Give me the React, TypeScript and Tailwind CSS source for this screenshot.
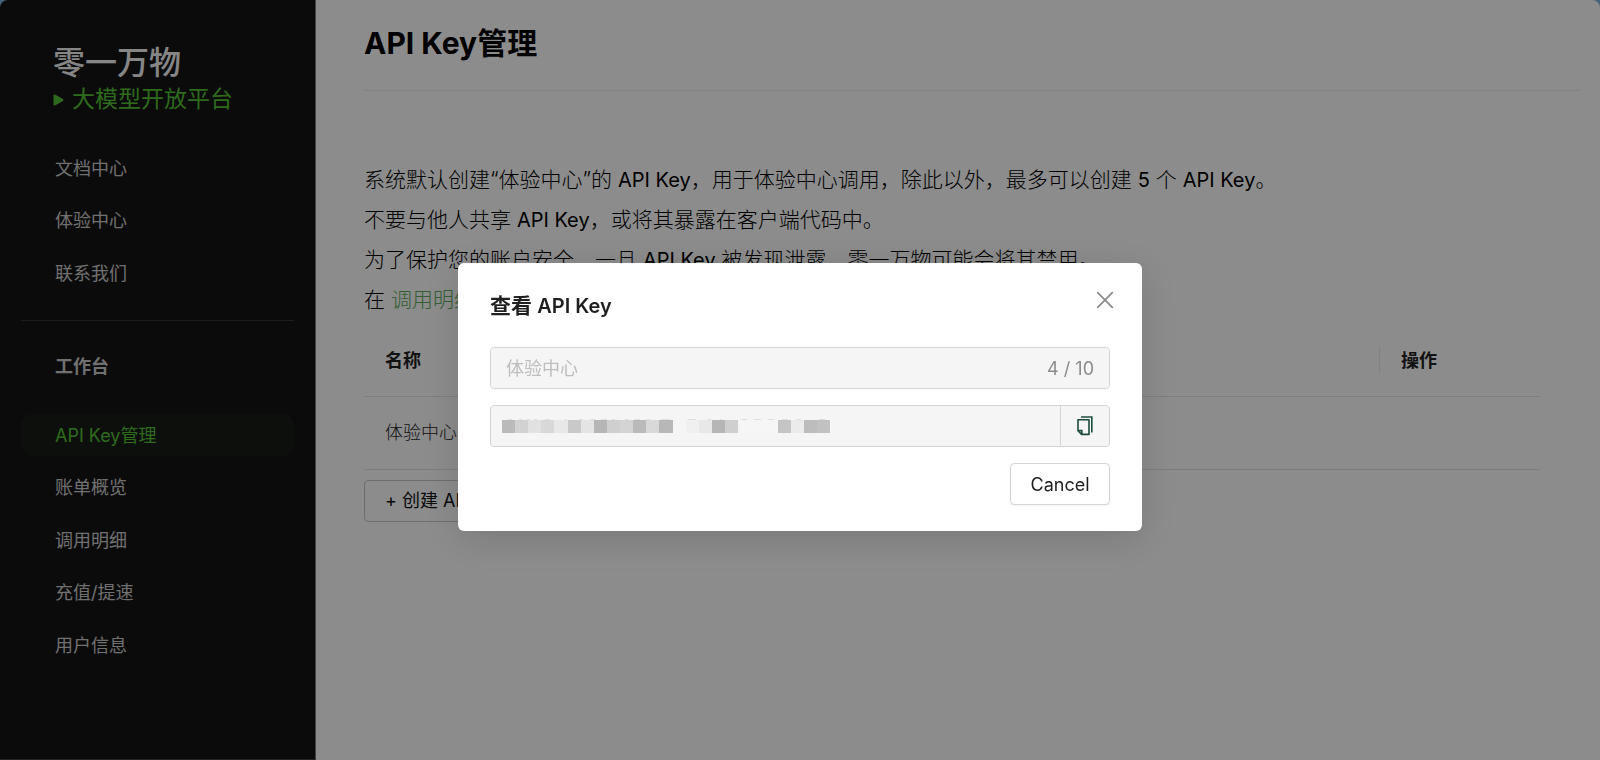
import type { ReactNode } from 'react'
import clsx from 'clsx'

const DOC_LINKS = ['文档中心', '体验中心', '联系我们']
const WORKSPACE_LINKS = ['API Key管理', '账单概览', '调用明细', '充值/提速', '用户信息']

// one block per entry, null leaves a gap
const KEY_MASK = [
  '#bababa', '#d2d2d2', '#e1e1e1', '#d8d8d8', '#e8e8e8', '#c9c9c9', '#e4e4e4', '#b6b6b6', '#cfcfcf', '#d4d4d4',
  '#bababa', '#d9d9d9', '#b8b8b8', null, '#f0f0f0', '#e8e8e8', '#b6b6b6', '#cfcfcf', '#f6f6f6', '#f6f6f6', '#f6f6f6',
  '#c4c4c4', '#ebebeb', '#bdbdbd', '#c2c2c2',
]

function NavLink({ active, children }: { active?: boolean; children: ReactNode }) {
  return (
    <a
      href="#"
      className={clsx(
        'flex h-[42px] items-center rounded-xl pl-[34px] text-[18px]',
        active ? 'bg-[#191d19] text-[#55c234]' : 'text-[#cccccc]',
      )}
    >
      {children}
    </a>
  )
}

function Sidebar() {
  return (
    <aside className="w-[316px] shrink-0 border-r border-b border-r-[#7a7a7a] border-b-[#444] bg-[#141414] px-[21px]">
      <div className="pt-[42px] pl-8">
        <div className="pt-px text-[32px] leading-10 font-medium text-[#f4f4f4]">零一万物</div>
        <div className="flex items-center gap-2 text-[23px] leading-[33px] text-[#55c234]">
          <svg width="11" height="12" viewBox="0 0 11 12" fill="currentColor" aria-hidden="true">
            <path d="M0.5 1.5Q0.5 0 2 0.6L10 5Q11 6 10 7L2 11.4Q0.5 12 0.5 10.5Z" />
          </svg>
          大模型开放平台
        </div>
      </div>
      <nav className="mt-[31px] flex h-[147px] flex-col justify-between">
        {DOC_LINKS.map((label) => (
          <NavLink key={label}>{label}</NavLink>
        ))}
      </nav>
      <hr className="mt-[26px] border-[#363636]" />
      <h2 className="mt-[25px] pl-[34px] text-[18px] leading-[42px] font-bold text-[#cccccc]">工作台</h2>
      <nav className="mt-[26px] flex h-[252px] flex-col justify-between">
        {WORKSPACE_LINKS.map((label, i) => (
          <NavLink key={label} active={i === 0}>
            {label}
          </NavLink>
        ))}
      </nav>
    </aside>
  )
}

function KeyTable() {
  return (
    <table className="w-full border-collapse text-left text-[18px] text-[#222]">
      <thead>
        <tr className="h-[72px] border-b border-[#e6e6e6]">
          <th className="pt-0.5 pl-[21px] font-bold">名称</th>
          <th className="w-[161px] pt-0.5 font-bold">
            <div className="border-l border-[#ececec] pl-[21px]">操作</div>
          </th>
        </tr>
      </thead>
      <tbody>
        <tr className="h-[73px] border-b border-[#e6e6e6]">
          <td className="pl-[21px] font-light">体验中心</td>
          <td />
        </tr>
      </tbody>
    </table>
  )
}

function Latin({ children }: { children: ReactNode }) {
  return <span className="text-[20px] font-normal">{children}</span>
}

function ApiKeyPage() {
  return (
    <main className="min-w-0 flex-1 bg-white pr-5 pl-12">
      <header className="border-b border-[#eee] pt-5 pb-6">
        <h1 className="text-[30px] leading-[46px] font-bold text-black">API Key管理</h1>
      </header>
      <div className="pt-[69px] pr-10">
        <div className="text-[21px] leading-10 font-light text-black">
          <p>
            系统默认创建“体验中心”的 <Latin>API Key</Latin>，用于体验中心调用，除此以外，最多可以创建 <Latin>5</Latin> 个{' '}
            <Latin>API Key</Latin>。
          </p>
          <p>
            不要与他人共享 <Latin>API Key</Latin>，或将其暴露在客户端代码中。
          </p>
          <p>
            为了保护您的账户安全，一旦 <Latin>API Key</Latin> 被发现泄露，零一万物可能会将其禁用。
          </p>
          <p>
            在{' '}
            <a href="#" className="text-[#5fae5f]">
              调用明细
            </a>
          </p>
        </div>
        <div className="mt-1">
          <KeyTable />
        </div>
        <button className="mt-2.5 h-[42px] rounded border border-[#c8c8c8] px-5 text-[18px] text-[#111]">
          + 创建 API Key
        </button>
      </div>
    </main>
  )
}

function CloseIcon() {
  return (
    <svg width="18" height="18" viewBox="0 0 18 18" fill="none" stroke="#8a8a8a" strokeWidth="1.7" aria-hidden="true">
      <path d="M1.2 1.2 16.8 16.8M16.8 1.2 1.2 16.8" />
    </svg>
  )
}

function CopyIcon() {
  return (
    <svg width="16" height="20" viewBox="0 0 16 20" fill="none" stroke="#1f4d3c" strokeWidth="1.6" aria-hidden="true">
      <path d="M4 1H14.8V16.4" />
      <path d="M1 3.8H12V18.4H4.6L1 14.8Z" strokeLinejoin="round" />
      <path d="M1.4 14.6H4.8V18" />
    </svg>
  )
}

function MaskedKey() {
  return (
    <svg
      width="328"
      height="15"
      viewBox="0 0 325 15"
      preserveAspectRatio="none"
      shapeRendering="crispEdges"
      className="absolute top-3 left-[11px]"
      aria-hidden="true"
    >
      <path
        d="M6 1.5h4M17 1.5h3M25 1.5h3M32 1.5h3M43 1.5h5M62 1.5h2M76 1.5h4M87 1.5h5M98 1.5h6M109 1.5h3M122 1.5h3M132 1.5h5M143 1.5h4M158 1.5h8M184 1.5h8M204 1.5h3M216 1.5h2M237 1.5h6M250 1.5h7M264 1.5h6M277 1.5h6M291 1.5h5M314 1.5h6"
        stroke="#dedede"
      />
      {KEY_MASK.map((fill, i) => fill && <rect key={i} x={i * 13} y="2" width="13" height="13" fill={fill} />)}
    </svg>
  )
}

function ViewKeyDialog() {
  return (
    <div
      role="dialog"
      aria-modal="true"
      aria-labelledby="view-key-title"
      className="relative mt-[263px] w-[684px] rounded-md bg-white px-8 py-[26px] shadow-[0_8px_40px_rgba(0,0,0,0.15)]"
    >
      <h2 id="view-key-title" className="text-[21px] leading-[34px] font-semibold text-[#1f1f1f]">
        查看 <span className="text-[20px]">API Key</span>
      </h2>
      <button aria-label="Close" className="absolute top-7 right-7">
        <CloseIcon />
      </button>

      <div className="mt-6 flex h-[42px] items-center rounded border border-[#d4d4d4] bg-[#f5f5f5] px-[15px] text-[18px]">
        <input
          aria-label="名称"
          disabled
          defaultValue="体验中心"
          className="min-w-0 flex-1 text-[#bdbdbd]"
        />
        <span className="text-[#8c8c8c]">4 / 10</span>
      </div>

      <div className="mt-4 flex h-[42px] rounded border border-[#d4d4d4] bg-[#f5f5f5]">
        <div className="relative min-w-0 flex-1">
          <input aria-label="API Key" readOnly className="size-full px-[11px]" />
          <MaskedKey />
        </div>
        <button
          aria-label="Copy"
          className="flex w-[49px] items-center justify-center border-l border-[#d4d4d4]"
        >
          <CopyIcon />
        </button>
      </div>

      <div className="mt-4 flex justify-end">
        <button className="h-[42px] w-[100px] rounded border border-[#d4d4d4] text-[18px] text-[#1f1f1f] shadow-xs">
          Cancel
        </button>
      </div>
    </div>
  )
}

export default function App() {
  return (
    <div className="bg-[#7fb4dc] font-['Inter','Noto_Sans_CJK_SC',sans-serif]">
      <div className="flex min-h-screen overflow-hidden rounded-t-lg">
        <Sidebar />
        <ApiKeyPage />
      </div>
      <div className="fixed inset-0 flex items-start justify-center bg-black/45">
        <ViewKeyDialog />
      </div>
    </div>
  )
}
